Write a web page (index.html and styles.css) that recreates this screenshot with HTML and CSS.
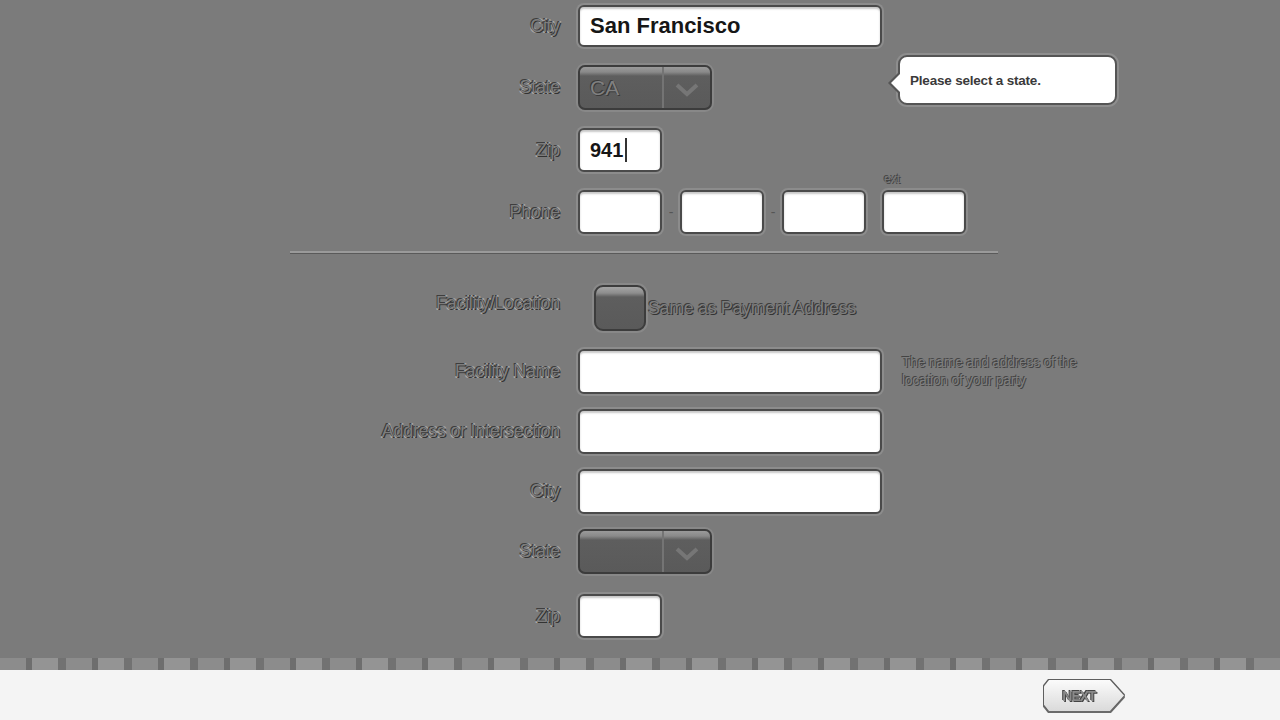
FILE: index.html
```html
<!DOCTYPE html>
<html lang="en">
<head>
    <meta charset="UTF-8">
    <meta name="viewport" content="width=device-width, initial-scale=1.0">
    <title>Payment and Facility</title>
    <link rel="stylesheet" href="styles.css">
</head>
<body>

    <div id="form-area">
        <!-- Zahlungsadresse -->
        <div class="row">
            <label class="lbl">City</label>
            <div class="field field-wide"><span class="value">San Francisco</span></div>
        </div>
        <div class="row row-state">
            <label class="lbl">State</label>
            <div class="select">
                <span class="select-text">CA</span>
                <span class="select-btn">
                    <svg width="26" height="16" viewBox="0 0 26 16"><path d="M3 3l10 9 10-9" fill="none" stroke="#767676" stroke-width="4"/></svg>
                </span>
            </div>
            <div class="tooltip">Please select a state.</div>
        </div>
        <div class="row">
            <label class="lbl">Zip</label>
            <div class="field field-short"><span class="value value-zip">941</span><span class="caret"></span></div>
        </div>
        <div class="row">
            <label class="lbl">Phone</label>
            <div class="phone">
                <div class="field field-short"></div>
                <span class="sep">-</span>
                <div class="field field-short"></div>
                <span class="sep">-</span>
                <div class="field field-short"></div>
                <div class="ext-wrap">
                    <span class="ext">ext</span>
                    <div class="field field-short"></div>
                </div>
            </div>
        </div>

        <div class="divider"></div>

        <!-- Veranstaltungsort -->
        <div class="section">
            <div class="row row-check">
                <label class="lbl">Facility/Location</label>
                <div class="checkbox"></div>
                <span class="check-text">Same as Payment Address</span>
            </div>
            <div class="row row-name">
                <label class="lbl">Facility Name</label>
                <div class="field field-wide"></div>
                <p class="help">The name and address of the<br>location of your party</p>
            </div>
            <div class="row">
                <label class="lbl">Address or Intersection</label>
                <div class="field field-wide"></div>
            </div>
            <div class="row">
                <label class="lbl">City</label>
                <div class="field field-wide"></div>
            </div>
            <div class="row">
                <label class="lbl">State</label>
                <div class="select">
                    <span class="select-text"></span>
                    <span class="select-btn">
                        <svg width="26" height="16" viewBox="0 0 26 16"><path d="M3 3l10 9 10-9" fill="none" stroke="#767676" stroke-width="4"/></svg>
                    </span>
                </div>
            </div>
            <div class="row row-last">
                <label class="lbl">Zip</label>
                <div class="field field-short"></div>
            </div>
        </div>
    </div>

    <div id="stripe"></div>

    <div id="footer">
        <div class="next-wrap">
            <button class="next-btn">NEXT</button>
        </div>
    </div>

</body>
</html>
```

FILE: styles.css
```css
/* Grundlayout */
body {
    margin: 0;
    height: 720px;
    overflow: hidden;
    background-color: #7b7b7b;
    font-family: "Liberation Sans", Arial, Helvetica, sans-serif;
    display: flex;
    flex-direction: column;
}

#form-area {
    height: 655px;
    padding: 5px 0 0 290px;
    box-sizing: border-box;
    display: flex;
    flex-direction: column;
    gap: 18px;
}

.row {
    display: flex;
    align-items: center;
    gap: 18px;
    position: relative;
}

/* Beschriftungen mit Prägeeffekt */
.lbl {
    width: 270px;
    text-align: right;
    font-size: 18px;
    color: #7d7d7d;
    letter-spacing: -0.3px;
    text-shadow: -1px -1px 0 #3e3e3e, 1px 1px 0 #333, 1px -1px 0 #a4a4a4, -1px 1px 0 #a8a8a8;
}

/* Eingabefelder */
.field {
    height: 42px;
    box-sizing: border-box;
    background: #fff;
    border: 2px solid #4a4a4a;
    border-radius: 6px;
    box-shadow: 0 0 0 2px #8c8c8c, inset 0 2px 2px #c8c8c8;
    display: flex;
    align-items: center;
    padding-left: 10px;
}

.field-wide {
    width: 304px;
}

.field-short {
    width: 84px;
    height: 44px;
}

.value {
    font-size: 22px;
    font-weight: bold;
    color: #161616;
}

.value-zip {
    font-size: 20px;
}

.caret {
    width: 2px;
    height: 24px;
    background: #333;
    margin-left: 2px;
}

/* Auswahlfeld */
.select {
    width: 134px;
    height: 45px;
    box-sizing: border-box;
    border: 2px solid #3c3c3c;
    border-radius: 7px;
    background: linear-gradient(#9a9a9a 0, #8a8a8a 5px, #5e5e5e 9px, #5a5a5a 100%);
    box-shadow: 0 0 0 2px #888;
    display: flex;
}

.select-text {
    width: 84px;
    padding-left: 10px;
    box-sizing: border-box;
    font-size: 21px;
    line-height: 41px;
    color: #808080;
    text-shadow: -1px -1px 0 #3a3a3a, 1px 1px 0 #3a3a3a;
    border-right: 2px solid #747474;
}

.select-btn {
    flex: 1;
    display: flex;
    align-items: center;
    justify-content: center;
    padding-top: 4px;
}

/* Hinweisblase */
.tooltip {
    position: absolute;
    left: 608px;
    top: -10px;
    width: 219px;
    height: 50px;
    box-sizing: border-box;
    padding-left: 10px;
    background: #fff;
    border: 2px solid #555;
    border-radius: 9px;
    box-shadow: 0 0 0 2px #8e8e8e;
    font-size: 13.5px;
    font-weight: bold;
    letter-spacing: -0.2px;
    color: #3a3a3a;
    display: flex;
    align-items: center;
}

.tooltip::before {
    content: "";
    position: absolute;
    left: -12px;
    top: 14px;
    border-top: 12px solid transparent;
    border-bottom: 12px solid transparent;
    border-right: 12px solid #555;
}

.tooltip::after {
    content: "";
    position: absolute;
    left: -9px;
    top: 15px;
    border-top: 11px solid transparent;
    border-bottom: 11px solid transparent;
    border-right: 11px solid #fff;
}

/* Telefonnummer */
.phone {
    display: flex;
    align-items: center;
}

.sep {
    width: 18px;
    text-align: center;
    font-size: 14px;
    color: #555;
}

.ext-wrap {
    position: relative;
    margin-left: 16px;
}

.ext {
    position: absolute;
    left: 2px;
    top: -18px;
    font-size: 12px;
    color: #777;
    text-shadow: -1px -1px 0 #444, 1px 1px 0 #444;
}

.divider {
    width: 708px;
    height: 2px;
    margin: -1px 0 0;
    background: #9a9a9a;
    border-bottom: 1px solid #5a5a5a;
}

.section {
    display: flex;
    flex-direction: column;
    gap: 15px;
    margin-top: 13px;
}

.section .field-wide {
    height: 45px;
}

.row-name {
    margin-top: 3px;
}

.row-last {
    margin-top: 5px;
}

/* Checkbox */
.checkbox {
    width: 52px;
    height: 46px;
    box-sizing: border-box;
    margin-left: 16px;
    border: 2px solid #3c3c3c;
    border-radius: 9px;
    background: linear-gradient(#a4a4a4 0, #8e8e8e 6px, #5e5e5e 10px, #5a5a5a 100%);
    box-shadow: 0 0 0 2px #888;
}

.check-text {
    margin-left: -16px;
    font-size: 18px;
    letter-spacing: -0.4px;
    color: #7d7d7d;
    text-shadow: -1px -1px 0 #3e3e3e, 1px 1px 0 #333;
}

.row-check .lbl {
    margin-bottom: 10px;
}

.help {
    margin: 0 0 0 2px;
    padding-bottom: 2px;
    font-size: 14px;
    line-height: 18px;
    letter-spacing: -0.3px;
    color: #7f7f7f;
    text-shadow: -1px -1px 0 #444, 1px 1px 0 #444;
}

/* Fußleiste */
#stripe {
    height: 12px;
    background: repeating-linear-gradient(90deg, #8c8c8c 0, #8c8c8c 26px, #6e6e6e 26px, #6e6e6e 32px, #949494 32px, #949494 58px, #727272 58px, #727272 66px);
    border-top: 3px solid #7b7b7b;
}

#footer {
    flex: 1;
    background: #f4f4f4;
    position: relative;
}

.next-wrap {
    position: absolute;
    left: 1044px;
    top: 10px;
    filter: drop-shadow(1px 0 0 #5e5e5e) drop-shadow(-1px 0 0 #5e5e5e) drop-shadow(0 -1px 0 #5e5e5e) drop-shadow(0 2px 0 #6a6a6a);
}

.next-btn {
    display: block;
    width: 80px;
    height: 31px;
    padding: 0 10px 0 0;
    border: none;
    background: linear-gradient(#fbfbfb, #dadada);
    clip-path: polygon(5px 0, 66px 0, 80px 50%, 66px 100%, 5px 100%, 0 80%, 0 20%);
    font-family: "Liberation Sans", Arial, sans-serif;
    font-size: 14px;
    font-weight: bold;
    letter-spacing: -1px;
    color: #8a8a8a;
    text-shadow: -1px -1px 0 #444, 1px 1px 0 #444;
    text-align: center;
}
```
